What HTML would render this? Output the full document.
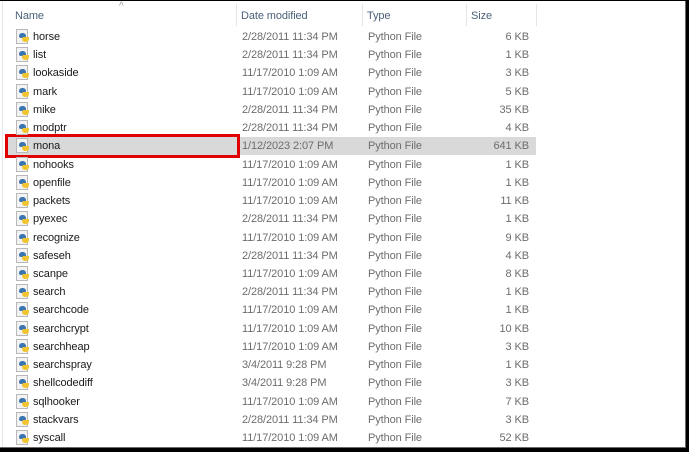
<!DOCTYPE html><html><head><style>
body{margin:0;width:689px;height:452px;background:#000;overflow:hidden;font-family:"Liberation Sans",sans-serif;font-size:11px;letter-spacing:-0.1px}
#w{position:absolute;left:0;top:1px;width:686px;height:447px;background:#fff;border-right:1px solid #6a6a6a;border-bottom:1px solid #6a6a6a;box-sizing:border-box}
#w:before{content:"";position:absolute;left:2px;top:0;width:1px;height:100%;background:#e8e8e8}
.h{position:absolute;top:9px;color:#4c607a}
.sep{position:absolute;top:3px;width:1px;height:22px;background:#e5e5e5}
.r{position:absolute;left:0;height:18px;width:689px}
.r span{position:absolute;top:3px;white-space:nowrap}
.n{left:33px;color:#1a1a1a}.d{left:242px;color:#6d6d6d}.t{left:368px;color:#6d6d6d}.s{left:470px;width:59px;text-align:right;color:#6d6d6d}
.ic{position:absolute;left:16px;top:1px;width:12px;height:15px;background:#f3f3f3;border:1px solid #b8b8b8;box-sizing:border-box}
.ic:after{content:"";position:absolute;left:2px;top:3px;width:7px;height:5px;background:#3b75b0;border-radius:3px 3px 0 2px}
.ic:before{content:"";position:absolute;left:5px;top:7px;width:7px;height:5px;background:#f2c530;border-radius:2px 0 3px 3px;z-index:1}
</style></head><body><div id="w">
<div class="h" style="left:15px">Name</div><div style="position:absolute;left:119px;top:0;color:#999;font-size:10px">^</div>
<div class="sep" style="left:236px"></div><div class="h" style="left:241px">Date modified</div>
<div class="sep" style="left:362px"></div><div class="h" style="left:367px">Type</div>
<div class="sep" style="left:466px"></div><div class="h" style="left:471px">Size</div>
<div class="sep" style="left:536px"></div>
<div style="position:absolute;left:7px;top:136px;width:529px;height:18px;background:#d9d9d9"></div>
<div style="position:absolute;left:5px;top:133px;width:229px;height:18px;border:3px solid #e00000"></div>
</div>
<div id="rows"></div>
<script>
var d=[["horse","2/28/2011 11:34 PM","6"],["list","2/28/2011 11:34 PM","1"],["lookaside","11/17/2010 1:09 AM","3"],["mark","11/17/2010 1:09 AM","5"],["mike","2/28/2011 11:34 PM","35"],["modptr","2/28/2011 11:34 PM","4"],["mona","1/12/2023 2:07 PM","641"],["nohooks","11/17/2010 1:09 AM","1"],["openfile","11/17/2010 1:09 AM","1"],["packets","11/17/2010 1:09 AM","11"],["pyexec","2/28/2011 11:34 PM","1"],["recognize","11/17/2010 1:09 AM","9"],["safeseh","2/28/2011 11:34 PM","4"],["scanpe","11/17/2010 1:09 AM","8"],["search","2/28/2011 11:34 PM","1"],["searchcode","11/17/2010 1:09 AM","1"],["searchcrypt","11/17/2010 1:09 AM","10"],["searchheap","11/17/2010 1:09 AM","3"],["searchspray","3/4/2011 9:28 PM","1"],["shellcodediff","3/4/2011 9:28 PM","3"],["sqlhooker","11/17/2010 1:09 AM","7"],["stackvars","2/28/2011 11:34 PM","3"],["syscall","11/17/2010 1:09 AM","52"]];
var h="";d.forEach(function(r,i){h+='<div class="r" style="top:'+(28+i*18.23)+'px"><i class="ic"></i><span class="n">'+r[0]+'</span><span class="d">'+r[1]+'</span><span class="t">Python File</span><span class="s">'+r[2]+' KB</span></div>'});
document.getElementById("rows").innerHTML=h;
</script></body></html>
